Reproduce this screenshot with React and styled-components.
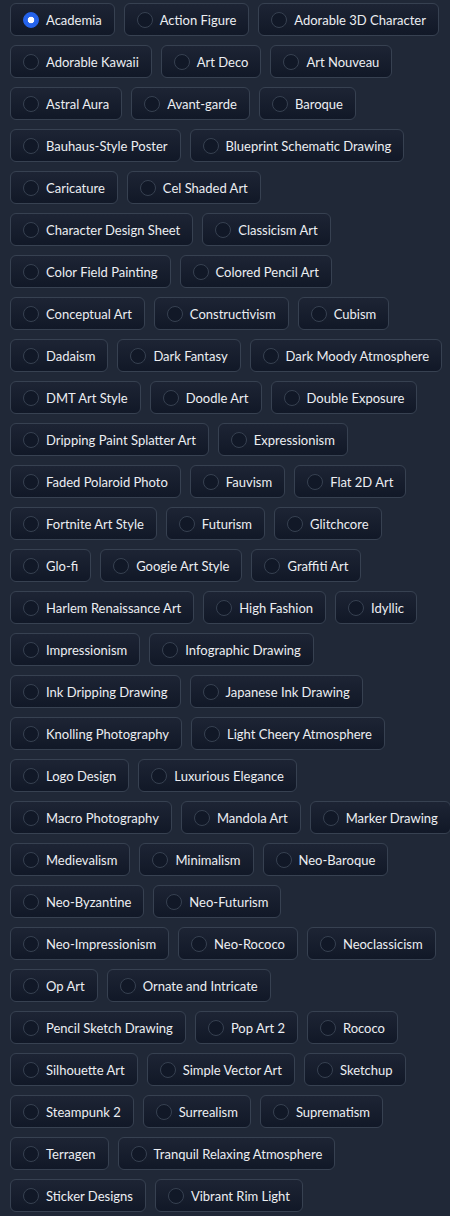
import React, { useState } from "react";
import styled, { createGlobalStyle } from "styled-components";

const GlobalStyle = createGlobalStyle`
  html, body {
    margin: 0;
    padding: 0;
    background: #202837;
  }
  body {
    font-family: Lato, "Noto Sans", sans-serif;
  }
`;

const StyledGroup = styled.div`
  display: flex;
  flex-direction: column;
  gap: 9px;
  padding: 3px 0 10px 10px;
`;

const StyledRow = styled.div`
  display: flex;
  gap: 9px;
`;

const StyledLabel = styled.label`
  display: flex;
  align-items: center;
  gap: 7px;
  height: 33px;
  box-sizing: border-box;
  padding: 0 12px;
  border: 1px solid #374151;
  border-radius: 6px;
  background: linear-gradient(to bottom, #1d2434, #111827);
  color: #eceef2;
  font-size: 13px;
  font-weight: 400;
  white-space: nowrap;
  cursor: pointer;
  user-select: none;
`;

const StyledRadio = styled.span`
  width: 16px;
  height: 16px;
  flex: none;
  box-sizing: border-box;
  border-radius: 50%;
  border: 1px solid ${(props) => (props.checked ? "#2563eb" : "#374151")};
  background: ${(props) =>
    props.checked
      ? "radial-gradient(circle, #ffffff 0 3px, #2563eb 3.6px)"
      : "#111827"};
`;

const ROWS = [
  ["Academia", "Action Figure", "Adorable 3D Character"],
  ["Adorable Kawaii", "Art Deco", "Art Nouveau"],
  ["Astral Aura", "Avant-garde", "Baroque"],
  ["Bauhaus-Style Poster", "Blueprint Schematic Drawing"],
  ["Caricature", "Cel Shaded Art"],
  ["Character Design Sheet", "Classicism Art"],
  ["Color Field Painting", "Colored Pencil Art"],
  ["Conceptual Art", "Constructivism", "Cubism"],
  ["Dadaism", "Dark Fantasy", "Dark Moody Atmosphere"],
  ["DMT Art Style", "Doodle Art", "Double Exposure"],
  ["Dripping Paint Splatter Art", "Expressionism"],
  ["Faded Polaroid Photo", "Fauvism", "Flat 2D Art"],
  ["Fortnite Art Style", "Futurism", "Glitchcore"],
  ["Glo-fi", "Googie Art Style", "Graffiti Art"],
  ["Harlem Renaissance Art", "High Fashion", "Idyllic"],
  ["Impressionism", "Infographic Drawing"],
  ["Ink Dripping Drawing", "Japanese Ink Drawing"],
  ["Knolling Photography", "Light Cheery Atmosphere"],
  ["Logo Design", "Luxurious Elegance"],
  ["Macro Photography", "Mandola Art", "Marker Drawing"],
  ["Medievalism", "Minimalism", "Neo-Baroque"],
  ["Neo-Byzantine", "Neo-Futurism"],
  ["Neo-Impressionism", "Neo-Rococo", "Neoclassicism"],
  ["Op Art", "Ornate and Intricate"],
  ["Pencil Sketch Drawing", "Pop Art 2", "Rococo"],
  ["Silhouette Art", "Simple Vector Art", "Sketchup"],
  ["Steampunk 2", "Surrealism", "Suprematism"],
  ["Terragen", "Tranquil Relaxing Atmosphere"],
  ["Sticker Designs", "Vibrant Rim Light"],
];

const App = () => {
  const [selected, setSelected] = useState("Academia");
  return (
    <>
      <GlobalStyle />
      <StyledGroup>
        {ROWS.map((row) => (
          <StyledRow key={row[0]}>
            {row.map((item) => (
              <StyledLabel key={item} onClick={() => setSelected(item)}>
                <StyledRadio checked={selected === item} />
                {item}
              </StyledLabel>
            ))}
          </StyledRow>
        ))}
      </StyledGroup>
    </>
  );
};

export default App;
